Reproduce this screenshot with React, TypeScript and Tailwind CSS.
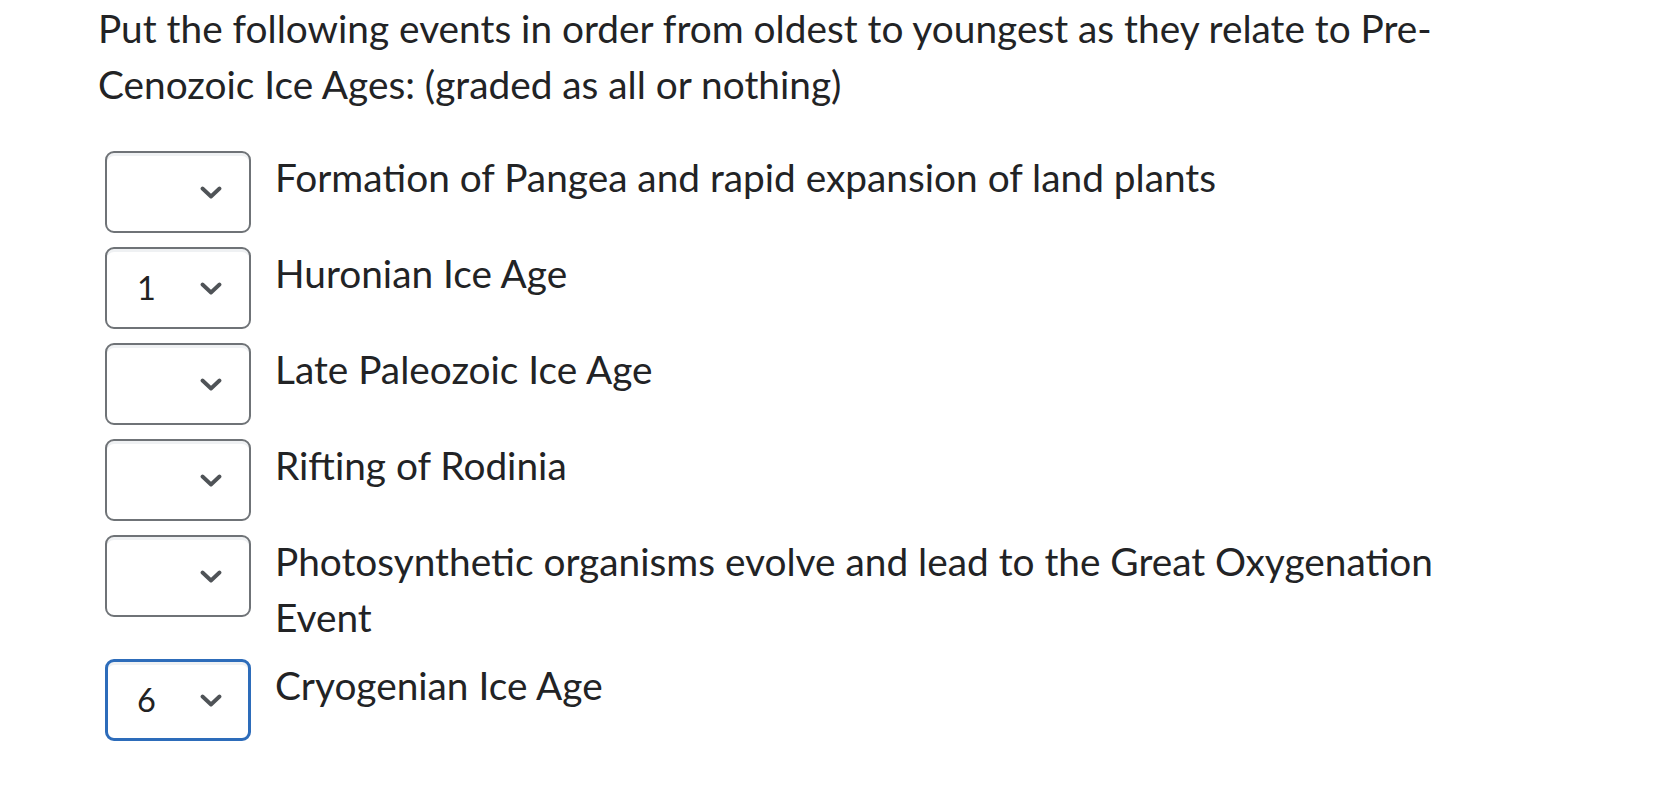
import React from "react";

type Row = { value: string; label: string; focused?: boolean };

const rows: Row[] = [
  { value: "", label: "Formation of Pangea and rapid expansion of land plants" },
  { value: "1", label: "Huronian Ice Age" },
  { value: "", label: "Late Paleozoic Ice Age" },
  { value: "", label: "Rifting of Rodinia" },
  { value: "", label: "Photosynthetic organisms evolve and lead to the Great Oxygenation Event" },
  { value: "6", label: "Cryogenian Ice Age", focused: true },
];

function Chevron() {
  return (
    <svg width="22" height="13" viewBox="0 0 22 13" className="shrink-0">
      <polyline
        points="2.5,2.5 11,10.5 19.5,2.5"
        fill="none"
        stroke="#4f5357"
        strokeWidth="3.8"
        strokeLinecap="round"
        strokeLinejoin="round"
      />
    </svg>
  );
}

function SelectBox({ value, focused }: { value: string; focused?: boolean }) {
  return (
    <div
      className={
        focused
          ? "mt-[2px] flex h-[82px] w-[146px] shrink-0 items-center rounded-[9px] border-[3px] border-[#2d6cba] bg-white pl-[29px] shadow-[inset_0_3px_0_0_#eff1f3]"
          : "mt-[2px] flex h-[82px] w-[146px] shrink-0 items-center rounded-[9px] border-2 border-[#6f7377] bg-white pl-[30px] shadow-[inset_0_3px_0_0_#eff1f3]"
      }
    >
      <span className="w-[63px] text-[32.5px] leading-none text-[#222222]">{value}</span>
      <Chevron />
    </div>
  );
}

export default function App() {
  return (
    <div
      className="min-h-[798px] w-full bg-white text-[#222325]"
      style={{ fontFamily: "Lato, 'Open Sans', sans-serif" }}
    >
      <div className="w-[1490px] pl-[98px]">
        <p className="text-[38.8px] leading-[56px]">
          Put the following events in order from oldest to youngest as they relate to Pre-Cenozoic Ice Ages: (graded as all or nothing)
        </p>
        <div className="mt-[37px] flex flex-col gap-[12px] pl-[7px]">
          {rows.map((r, i) => (
            <div key={i} className="flex items-start gap-[24px]">
              <SelectBox value={r.value} focused={r.focused} />
              <div className="text-[38.8px] leading-[56px]">{r.label}</div>
            </div>
          ))}
        </div>
      </div>
    </div>
  );
}
